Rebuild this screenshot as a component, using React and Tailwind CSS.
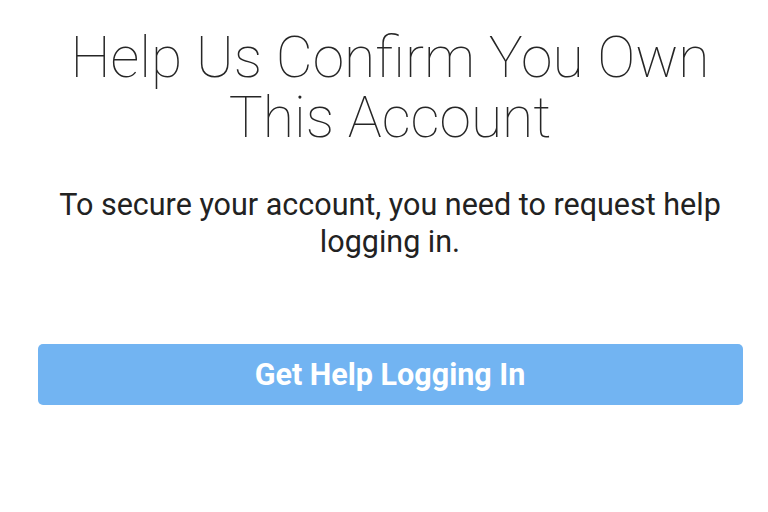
export default function App() {
  return (
    <div className="w-[768px] h-[512px] bg-white flex flex-col items-center overflow-hidden pl-[12px]" style={{ fontFamily: 'Roboto, "Liberation Sans", sans-serif' }}>
      <h1 className="mt-[28px] text-[57px] leading-[60px] font-thin text-[#262626] text-center">
        Help Us Confirm You Own<br />This Account
      </h1>
      <p className="mt-[38px] w-[690px] text-[30.5px] leading-[37px] text-[#222222] text-center">
        To secure your account, you need to request help logging in.
      </p>
      <button className="mt-[84px] w-[705px] h-[61px] shrink-0 rounded-[5px] bg-[#72b4f2] text-white font-bold text-[30.5px] flex items-center justify-center">
        Get Help Logging In
      </button>
    </div>
  );
}
